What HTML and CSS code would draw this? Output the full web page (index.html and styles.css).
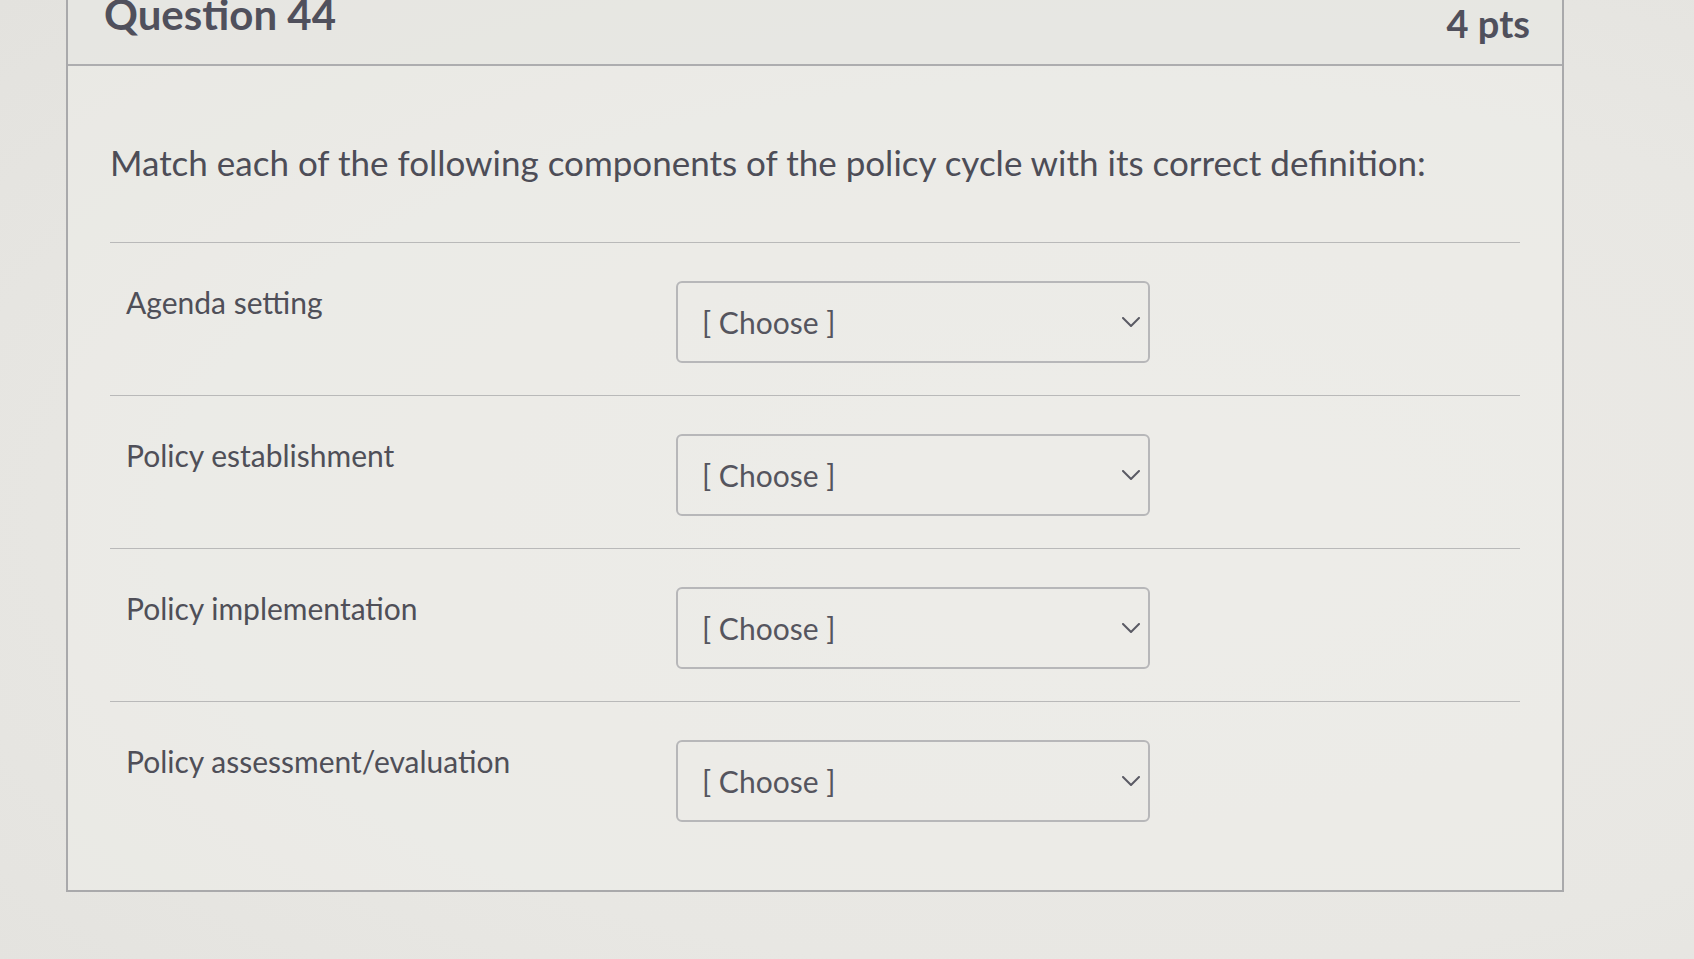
FILE: index.html
```html
<!DOCTYPE html>
<html lang="en">
<head>
<meta charset="utf-8">
<title>Question 44</title>
<link rel="stylesheet" href="styles.css">
</head>
<body>
<div class="page">
  <section class="question">
    <header class="q-header">
      <h2 class="q-title">Question 44</h2>
      <span class="q-points">4 pts</span>
    </header>
    <div class="q-body">
      <p class="q-text">Match each of the following components of the policy cycle with its correct definition:</p>
      <div class="match-list">
        <div class="match-row">
          <div class="match-label">Agenda setting</div>
          <div class="select">
            <span class="select-text">[ Choose ]</span>
            <svg class="chevron" viewBox="0 0 18 10" width="18" height="10"><path d="M1 1 L9 9 L17 1" fill="none" stroke="#5a5a64" stroke-width="2" stroke-linecap="round" stroke-linejoin="round"/></svg>
          </div>
        </div>
        <div class="match-row">
          <div class="match-label">Policy establishment</div>
          <div class="select">
            <span class="select-text">[ Choose ]</span>
            <svg class="chevron" viewBox="0 0 18 10" width="18" height="10"><path d="M1 1 L9 9 L17 1" fill="none" stroke="#5a5a64" stroke-width="2" stroke-linecap="round" stroke-linejoin="round"/></svg>
          </div>
        </div>
        <div class="match-row">
          <div class="match-label">Policy implementation</div>
          <div class="select">
            <span class="select-text">[ Choose ]</span>
            <svg class="chevron" viewBox="0 0 18 10" width="18" height="10"><path d="M1 1 L9 9 L17 1" fill="none" stroke="#5a5a64" stroke-width="2" stroke-linecap="round" stroke-linejoin="round"/></svg>
          </div>
        </div>
        <div class="match-row last">
          <div class="match-label">Policy assessment/evaluation</div>
          <div class="select">
            <span class="select-text">[ Choose ]</span>
            <svg class="chevron" viewBox="0 0 18 10" width="18" height="10"><path d="M1 1 L9 9 L17 1" fill="none" stroke="#5a5a64" stroke-width="2" stroke-linecap="round" stroke-linejoin="round"/></svg>
          </div>
        </div>
      </div>
    </div>
  </section>
</div>
</body>
</html>
```

FILE: styles.css
```css
* { box-sizing: border-box; }

html, body {
  margin: 0;
  padding: 0;
  height: 100%;
  overflow: hidden;
}

body {
  background: radial-gradient(ellipse at 65% 55%, #eceae6 0%, #e8e7e3 60%, #e3e2de 100%);
  font-family: Lato, "Open Sans", sans-serif;
  color: #4f4f58;
}

.page {
  padding-left: 66px;
  width: 1564px;
}

.question {
  margin-top: -40px;
  border: 2px solid #a9a9ab;
  background: rgba(240, 239, 235, 0.45);
}

.q-header {
  display: flex;
  justify-content: space-between;
  align-items: flex-start;
  padding: 31px 32px 0 36px;
  height: 104px;
  border-bottom: 2px solid #adadaf;
  background: rgba(228, 227, 223, 0.5);
}

.q-title {
  margin: 0;
  font-size: 42px;
  line-height: 42px;
  font-weight: 700;
  color: #50505c;
}

.q-points {
  font-size: 38px;
  line-height: 38px;
  font-weight: 700;
  color: #50505c;
  padding-top: 11px;
}

.q-body {
  padding: 0 42px 36px 42px;
}

.q-text {
  margin: 76px 0 60px 0;
  font-size: 35px;
  line-height: 40px;
  color: #4d4d57;
}

.match-row {
  display: flex;
  align-items: flex-start;
  border-top: 1px solid #b9b9b9;
  padding: 38px 0 33px 0;
  height: 153px;
}

.match-label {
  width: 566px;
  padding-left: 16px;
  padding-top: 4px;
  font-size: 30px;
  line-height: 34px;
  color: #4f4f58;
}

.select {
  width: 474px;
  height: 82px;
  border: 2px solid #b7b7b9;
  border-radius: 6px;
  display: flex;
  align-items: center;
  justify-content: space-between;
  padding: 0 8px 0 24px;
}

.select-text {
  font-size: 30px;
  line-height: 36px;
  color: #55555e;
}

.chevron {
  display: block;
}
```
